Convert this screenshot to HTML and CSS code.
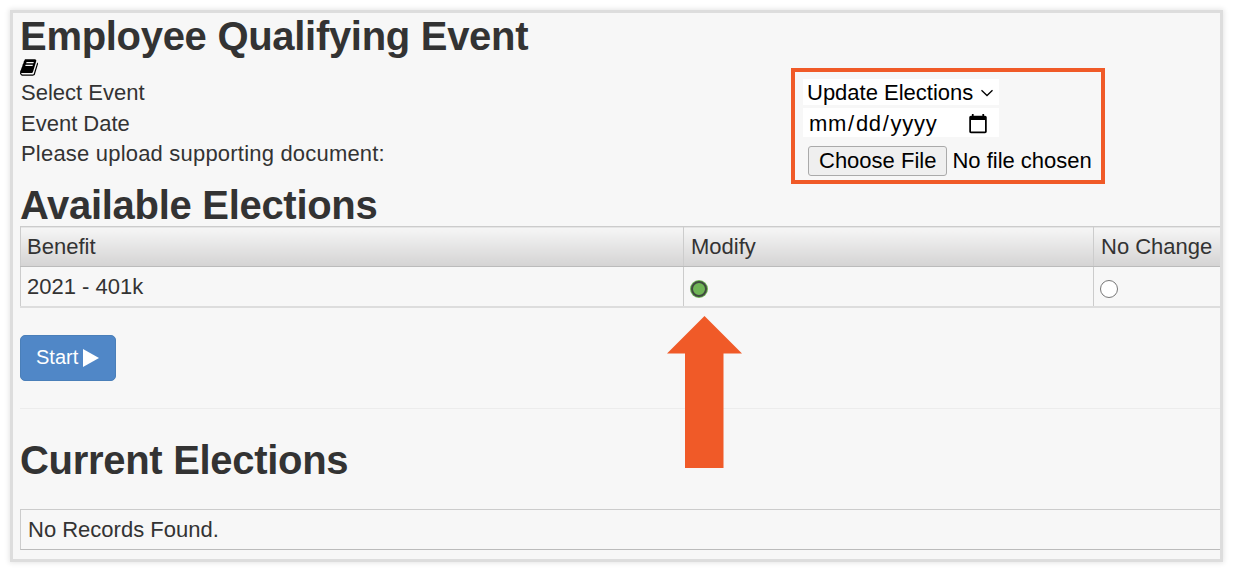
FILE: index.html
```html
<!DOCTYPE html>
<html lang="en">

<head>
  <meta charset="UTF-8">
  <title>Employee Qualifying Event</title>
  <link rel="stylesheet" href="styles.css">
</head>

<body>
  <div class="panel">
    <h1 class="title">Employee Qualifying Event</h1>
    <svg class="book" viewBox="0 128 1664 1536" width="18" height="17">
      <path fill="#000" d="M1639 478q40 57 18 129l-275 906q-19 64-76.500 107.500t-122.500 43.500h-923q-77 0-148.500-53.500t-99.500-131.500q-24-67-2-127 0-4 3-27t4-37q1-8-3-21.500t-3-19.500q2-11 8-21t16.500-23.500 16.500-23.500q23-38 45-91.500t30-91.500q3-10 .5-30t-.5-28q3-11 17-28t17-23q21-36 42-92t25-90q1-9-2.500-32t.5-28q4-13 22-30.500t22-22.500q19-26 42.500-84.500t27.500-96.500q1-8-3-25.500t-2-26.500q2-8 9-18t18-23 17-21q8-12 16.500-30.500t15-35 16-36 19.500-32 26.500-23.500 36-11.500 47.500 5.500l-1 3q38-9 51-9h761q74 0 114 56t18 130l-274 906q-36 119-71.500 153.500t-128.500 34.500h-869q-27 0-38 15-11 16-1 43 24 70 144 70h923q29 0 56-15.500t35-41.500l300-987q7-22 5-57 38 15 59 43zm-1064 2q-4 13 2 22.500t20 9.500h608q13 0 25.500-9.500t16.500-22.500l21-64q4-13-2-22.500t-20-9.500h-608q-13 0-25.500 9.500t-16.500 22.500zm-83 256q-4 13 2 22.500t20 9.500h608q13 0 25.500-9.500t16.500-22.500l21-64q4-13-2-22.500t-20-9.500h-608q-13 0-25.500 9.500t-16.500 22.500z"/>
    </svg>
    <div class="event_form">
      <div class="labels">
        <p>Select Event</p>
        <p>Event Date</p>
        <p class="upload_label">Please upload supporting document:</p>
      </div>
      <div class="controls">
        <div class="select_wrap">
          <select class="event_select">
            <option>Update Elections</option>
          </select>
          <svg class="chevron" viewBox="0 0 14 8" width="14" height="8">
            <path fill="none" stroke="#000" stroke-width="1.300" d="M1.500 1.200L7 6.500l5.500-5.300"/>
          </svg>
        </div>
        <input class="event_date" type="date">
        <input class="event_file" type="file">
      </div>
    </div>

    <h1 class="section">Available Elections</h1>
    <table class="grid">
      <colgroup>
        <col class="col_benefit">
        <col class="col_modify">
        <col class="col_nochange">
      </colgroup>
      <thead>
        <tr>
          <th>Benefit</th>
          <th>Modify</th>
          <th>No Change</th>
        </tr>
      </thead>
      <tbody>
        <tr>
          <td class="benefit_name">2021 - 401k</td>
          <td><input class="radio" type="radio" name="choice" checked></td>
          <td><input class="radio" type="radio" name="choice"></td>
        </tr>
      </tbody>
    </table>

    <button class="start_btn">
      Start
      <svg viewBox="0 0 16 18" width="16" height="18">
        <path fill="#fff" d="M0 0l16 9-16 9z"/>
      </svg>
    </button>
    <hr class="divider">

    <h1 class="current">Current Elections</h1>
    <div class="no_records">No Records Found.</div>

    <!-- annotation arrow -->
    <svg class="arrow" viewBox="0 0 75 152" width="75" height="152">
      <path fill="#f05a28" d="M37.500 0L75 37.500H56.500V152H18V37.500H0z"/>
    </svg>
  </div>
</body>

</html>
```

FILE: styles.css
```css
* {
  box-sizing: border-box;
}

body {
  margin: 0;
  padding: 13px 14px 13px 13px;
  background: #fff;
  font-family: "Liberation Sans", Arial, sans-serif;
  font-size: 22px;
  color: #333;
}

.panel {
  position: relative;
  height: 546px;
  padding: 0 0 0 7px;
  background: #f7f7f7;
  box-shadow: 0 0 0 3px #ddd, 0 0 5px 4px #e6e6e6;
  overflow: hidden;
}

h1 {
  margin: 0;
  font-size: 40px;
  line-height: 46px;
  font-weight: 700;
  letter-spacing: -0.3px;
}

.book {
  display: block;
}

.event_form {
  display: flex;
}

.labels {
  width: 771px;
  padding: 2px 0 0 1px;
}

.labels p {
  margin: 0;
  height: 30px;
  line-height: 30px;
}

.labels p:first-child {
  height: 31px;
}

.labels .upload_label {
  letter-spacing: 0.2px;
}

/* orange frame from the annotation */
.controls {
  width: 314px;
  height: 116px;
  margin-top: -8px;
  padding: 7px 8px;
  border: 4px solid #f05a28;
  display: flex;
  flex-direction: column;
  align-items: flex-start;
  color: #000;
}

.select_wrap {
  position: relative;
  height: 26px;
}

.event_select {
  display: block;
  appearance: none;
  width: 196px;
  height: 26px;
  padding: 0 0 0 4px;
  border: 0;
  border-radius: 0;
  background: #fff;
  font: 22px "Liberation Sans", Arial, sans-serif;
  color: #000;
}

.chevron {
  position: absolute;
  left: 177px;
  top: 10px;
}

.event_date {
  width: 196px;
  height: 29px;
  margin-top: 3px;
  padding: 2px 8px 0 5px;
  border: 0;
  background: #fff;
  font: 22px "Liberation Sans", Arial, sans-serif;
  letter-spacing: 0.7px;
  color: #000;
}

.event_file {
  width: 295px;
  margin: 9px 0 0 5px;
  font: 22px "Liberation Sans", Arial, sans-serif;
  color: #000;
}

.event_file::file-selector-button {
  height: 30px;
  margin-right: 5px;
  padding: 0 10px;
  border: 1px solid #aaa;
  border-radius: 3px;
  background: #efefef;
  font: 22px "Liberation Sans", Arial, sans-serif;
  color: #000;
}

.section {
  line-height: 42px;
}

.grid {
  width: 1240px;
  border-collapse: collapse;
  table-layout: fixed;
}

.col_benefit {
  width: 663px;
}

.col_modify {
  width: 410px;
}

.grid th,
.grid td {
  height: 40px;
  padding: 0 6px;
  border: 1px solid #ccc;
  font-weight: 400;
  text-align: left;
}

.grid th {
  padding: 0 7px;
  background: linear-gradient(#f6f6f6, #d4d3d3);
  border-bottom-color: #bbb;
}

.grid th:first-child {
  padding-left: 6px;
}

.grid td {
  border-bottom: 2px solid #ddd;
}

.grid .benefit_name {
  padding-bottom: 0;
  padding-top: 2px;
  vertical-align: top;
  line-height: 36px;
}

.radio {
  appearance: none;
  display: block;
  width: 18px;
  height: 18px;
  margin: 6px 0 0;
  border: 1px solid #777;
  border-radius: 50%;
  background: #fff;
}

.radio:checked {
  width: 16px;
  height: 16px;
  margin-left: 1px;
  border: 2px solid #3f4a3f;
  background: #6fb556;
  box-shadow: 0 0 0 1px #6fb556;
}

.start_btn {
  display: flex;
  align-items: center;
  gap: 5px;
  width: 96px;
  height: 46px;
  margin-top: 27px;
  padding: 0 0 0 15px;
  border: 1px solid #4a7fb9;
  border-radius: 5px;
  background: #5087c7;
  font: 20px "Liberation Sans", Arial, sans-serif;
  color: #fff;
}

.divider {
  margin: 27px 0 0;
  border: 0;
  border-top: 1px solid #ececec;
}

.current {
  margin-top: 28px;
}

.no_records {
  width: 1240px;
  height: 41px;
  margin-top: 26px;
  padding: 0 7px;
  line-height: 39px;
  border: 1px solid #ccc;
  border-bottom-color: #bbb;
}

.arrow {
  position: absolute;
  left: 654px;
  top: 303px;
}
```
